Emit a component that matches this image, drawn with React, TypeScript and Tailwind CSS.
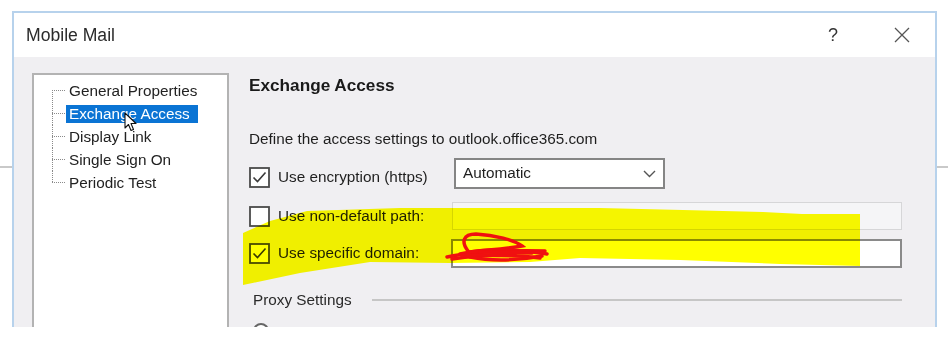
import React from 'react';

const treeItems = ['General Properties', 'Exchange Access', 'Display Link', 'Single Sign On', 'Periodic Test'];

const Checkbox: React.FC<{ checked?: boolean }> = ({ checked }) => (
  <svg width="21" height="21" viewBox="0 0 21 21" className="shrink-0">
    <rect x="1" y="1" width="19" height="19" fill="#fff" stroke="#4a4a4a" strokeWidth="1.8" />
    {checked && <polyline points="4.5,10.5 8.5,14.5 16.5,5.5" fill="none" stroke="#3a3a3a" strokeWidth="1.6" />}
  </svg>
);

// dotted connector for one tree row
const TreeLine: React.FC<{ first: boolean; last: boolean }> = ({ first, last }) => (
  <svg width="14" height="23" className="shrink-0">
    <line x1="0.5" y1={first ? 11 : 0} x2="0.5" y2={last ? 11.5 : 23} stroke="#8a8a8a" strokeDasharray="1 1" />
    <line x1="0" y1="11.5" x2="14" y2="11.5" stroke="#8a8a8a" strokeDasharray="1 1" />
  </svg>
);

const App: React.FC = () => {
  return (
    <div className="relative w-[948px] h-[347px] bg-white overflow-hidden font-['Liberation_Sans',Arial,sans-serif] text-[15.3px] text-[#1e1e1e]">
      <div className="flex">
        {/* background window edge, left */}
        <div className="w-[12px] pt-[166px]">
          <div className="h-[2px] bg-[#c9c9c9]" />
        </div>

        {/* dialog */}
        <div className="mt-[11px] w-[925px] h-[316px] border-2 border-b-0 border-[#b7d2ec] flex flex-col overflow-hidden">
          {/* title bar */}
          <div className="h-[44px] shrink-0 bg-white flex items-center pl-[12px] pr-[23px]">
            <span className="text-[17.6px] text-[#2b2b2b]">Mobile Mail</span>
            <div className="flex-1" />
            <div className="w-[20px] text-center text-[18px] text-[#333]">?</div>
            <div className="w-[20px] ml-[49px] flex justify-center">
              <svg width="16" height="16" viewBox="0 0 16 16">
                <path d="M1 1 L15 15 M15 1 L1 15" stroke="#555" strokeWidth="1.3" />
              </svg>
            </div>
          </div>

          {/* body */}
          <div className="flex-1 min-h-0 overflow-hidden bg-[#f0eff2] flex items-start pl-[18px] pt-[16px]">
            {/* tree */}
            <div className="w-[197px] h-[260px] shrink-0 bg-white border-2 border-[#b3b3b3] pt-[4px] pl-[18px]">
              {treeItems.map((t, i) => (
                <div key={t} className="flex items-center h-[23px]">
                  <TreeLine first={i === 0} last={i === treeItems.length - 1} />
                  <span
                    className={
                      i === 1
                        ? 'bg-[#0a74d4] text-white px-[3px] leading-[18px] w-[132px] whitespace-nowrap'
                        : 'px-[3px] leading-[18px] text-[#222] whitespace-nowrap'
                    }
                  >
                    {t}
                  </span>
                </div>
              ))}
            </div>

            {/* settings */}
            <div className="w-[653px] shrink-0 ml-[20px] pt-[2px] flex flex-col">
              <div className="text-[17.2px] font-bold leading-[20px] text-[#1a1a1a]">Exchange Access</div>
              <div className="mt-[35px] leading-[18px]">Define the access settings to outlook.office365.com</div>

              <div className="mt-[10px] flex items-start">
                <div className="w-[205px] pt-[8px] flex items-center gap-[8px]">
                  <Checkbox checked />
                  <span>Use encryption (https)</span>
                </div>
                <div className="w-[211px] h-[31px] bg-white border-2 border-[#858585] flex items-center pl-[7px] pr-[7px]">
                  <span className="flex-1">Automatic</span>
                  <svg width="13" height="8" viewBox="0 0 13 8">
                    <polyline points="1,1 6.5,6.5 12,1" fill="none" stroke="#555" strokeWidth="1.4" />
                  </svg>
                </div>
              </div>

              <div className="mt-[13px] flex items-center">
                <div className="w-[203px] flex items-center gap-[8px]">
                  <Checkbox />
                  <span>Use non-default path:</span>
                </div>
                <div className="flex-1 h-[28px] bg-[#f5f5f7] border border-[#d6d6d8]" />
              </div>

              <div className="mt-[9px] flex items-center">
                <div className="w-[202px] flex items-center gap-[8px]">
                  <Checkbox checked />
                  <span>Use specific domain:</span>
                </div>
                <div className="flex-1 h-[29px] bg-white border-2 border-[#8a8a8a]" />
              </div>

              <div className="mt-[23px] flex items-center pl-[4px]">
                <span className="leading-[18px] text-[#2a2a2a]">Proxy Settings</span>
                <div className="flex-1 ml-[20px] h-[2px] bg-[#c6c6c6]" />
              </div>

              <div className="mt-[14px] pl-[4px]">
                <div className="w-[16px] h-[16px] rounded-full border-2 border-[#666] bg-white" />
              </div>
            </div>
          </div>
        </div>

        {/* background window edge, right */}
        <div className="flex-1 pt-[166px]">
          <div className="h-[2px] bg-[#c9c9c9]" />
        </div>
      </div>

      {/* mouse cursor */}
      <svg className="absolute left-[124px] top-[112px]" width="14" height="21" viewBox="0 0 14 21">
        <path d="M1 1 L1 16 L4.5 12.5 L7 18.5 L9.5 17.5 L7 11.5 L12 11.5 Z" fill="#fff" stroke="#111" strokeWidth="1.1" strokeLinejoin="round" />
      </svg>

      {/* highlighter annotation */}
      <svg className="absolute inset-0 pointer-events-none mix-blend-multiply" width="948" height="347">
        <polygon
          fill="#ffff00"
          points="243,233 270,221 307,211 400,208 600,208 683,210 763,212 802,214 860,214 860,266 780,264 680,260 580,258 530,262 450,263 370,262 300,273 243,285"
        />
      </svg>

      {/* red scribble */}
      <svg className="absolute inset-0 pointer-events-none" width="948" height="347">
        <g fill="none" stroke="#f01010" strokeWidth="3.5" strokeLinecap="round">
          <path d="M468 251 C461 242 463 234 476 234 C495 235 514 240 522 246 C505 249 486 250 470 252" />
          <path d="M447 257 C470 252 500 250 545 251" />
          <path d="M452 259 C480 255 512 254 540 258" />
          <path d="M460 254 C490 248 520 249 547 254" />
          <path d="M470 257 C495 262 520 260 542 256" />
          <path d="M462 256 C480 253 500 257 515 255" />
          <path d="M480 252 L532 253" />
        </g>
      </svg>
    </div>
  );
};

export default App;
